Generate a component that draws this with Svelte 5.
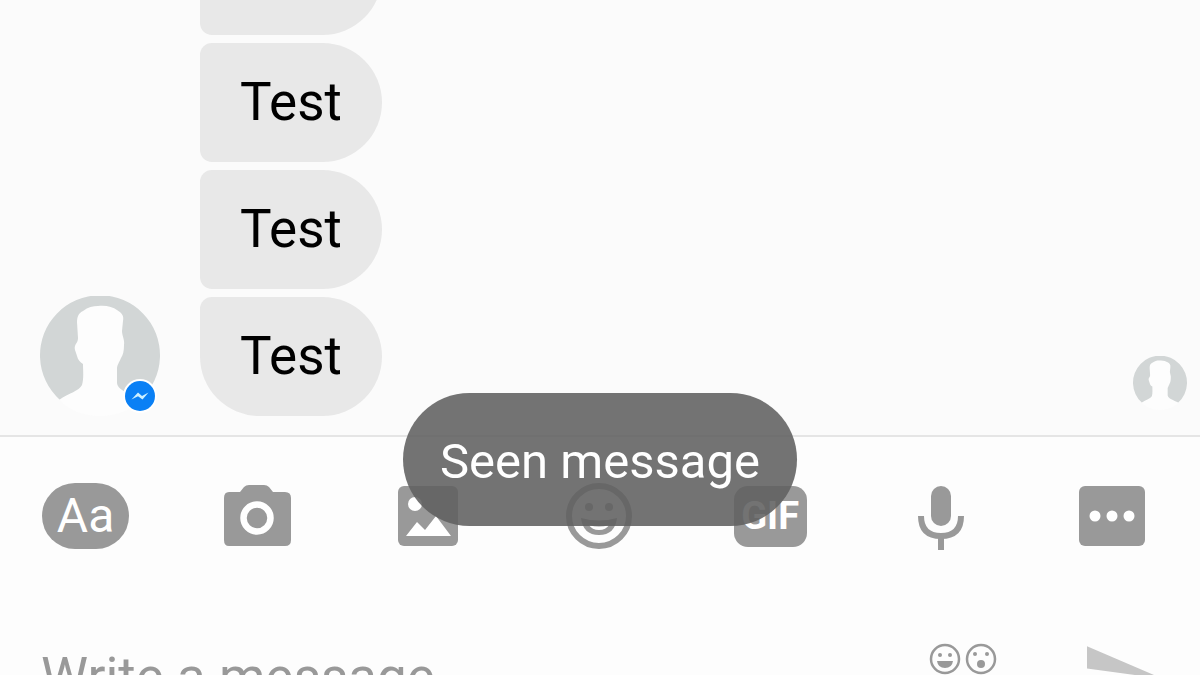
<script lang="ts">
    let draft = '';

    const messages = ['Test', 'Test', 'Test', 'Test'];
</script>

<svelte:head>
    <title>Chat</title>
</svelte:head>

{#snippet avatar()}
    <svg class="avatar" viewBox="0 0 120 120" aria-hidden="true">
        <path d="M20 104A60 60 0 1 1 100 104L60 96Z" fill="#d2d6d6" />
        <path
            d="M58 10C66 9 73 11 77 14C82 17 84 20 83 25L82 35C82 40 85 44 84 49C84 55 83 59 81 62C79 67 77 69 77 73V87C78 95 90 97 101 104C90 115 75 120 60 120S30 115 19 104C29 97 39 95 42 89C44 83 43 74 43 68C40 66 38 64 37 60C36 56 34 53 35 50C36 47 38 46 38 42L37 26C37 20 39 17 43 15C48 11 53 10 58 10Z"
            fill="#fdfdfd"
        />
    </svg>
{/snippet}

<main class="screen">
    <section class="chat">
        <div class="sender">
            {@render avatar()}
            <svg class="badge" viewBox="0 0 34 34" aria-hidden="true">
                <circle cx="17" cy="17" r="17" fill="#fff" />
                <circle cx="17" cy="17" r="15" fill="#0a80f5" />
                <path d="M8.500 20.500L15 13.500L19 17L25.500 13.500L19.500 20.500L15 17.200Z" fill="#cdf0ff" />
            </svg>
        </div>

        <div class="bubbles">
            {#each messages as message}
                <div class="bubble">{message}</div>
            {/each}
        </div>

        <div class="seen">
            {@render avatar()}
        </div>
    </section>

    <section class="composer">
        <div class="toolbar">
            <button class="tool" aria-label="Text">
                <span class="text-icon">Aa</span>
            </button>
            <button class="tool" aria-label="Camera">
                <svg viewBox="0 0 88 68">
                    <path d="M16 10H27L31 5Q33 3 36 3H51Q54 3 56 5L60 10H72Q78 10 78 16V58Q78 64 72 64H16Q11 64 11 58V16Q11 10 16 10Z" />
                    <circle cx="44" cy="36" r="13.500" fill="none" stroke="#fff" stroke-width="6.500" />
                </svg>
            </button>
            <button class="tool" aria-label="Photos">
                <svg viewBox="0 0 88 68">
                    <rect x="14" y="4" width="60" height="60" rx="6" />
                    <circle cx="31" cy="22" r="7" fill="#fff" />
                    <path d="M22 54L33 40L41 48L52 34L67 54Z" fill="#fff" />
                </svg>
            </button>
            <button class="tool" aria-label="Stickers">
                <svg viewBox="0 0 88 68">
                    <circle cx="44" cy="34" r="30" fill="none" stroke="#999" stroke-width="6" />
                    <circle cx="34" cy="25" r="4" />
                    <circle cx="54" cy="25" r="4" />
                    <path d="M26 36Q44 41 62 36Q60 53 44 53T26 36Z" />
                    <path d="M34 43Q44 46 54 43Q51 48 44 48T34 43Z" fill="#fff" />
                </svg>
            </button>
            <button class="tool" aria-label="GIFs">
                <span class="gif-icon">GIF</span>
            </button>
            <button class="tool" aria-label="Voice">
                <svg viewBox="0 0 88 68">
                    <rect x="34" y="4" width="20" height="40" rx="10" />
                    <path d="M24 34Q24 54 44 54T64 34" fill="none" stroke="#999" stroke-width="6" />
                    <path d="M41 54H47V68H41Z" />
                </svg>
            </button>
            <button class="tool" aria-label="More">
                <svg viewBox="0 0 88 68">
                    <rect x="11" y="4" width="66" height="60" rx="6" />
                    <circle cx="27" cy="34" r="5.500" fill="#fff" />
                    <circle cx="44" cy="34" r="5.500" fill="#fff" />
                    <circle cx="61" cy="34" r="5.500" fill="#fff" />
                </svg>
            </button>
        </div>

        <form class="write" on:submit|preventDefault>
            <input type="text" placeholder="Write a message" aria-label="Write a message" bind:value={draft} />
            <button type="button" class="emoji" aria-label="Emoji">
                <svg viewBox="0 0 68 32">
                    <g fill="none" stroke="#999" stroke-width="2.500">
                        <circle cx="16" cy="16" r="14" />
                        <circle cx="52" cy="16" r="14" />
                    </g>
                    <circle cx="11" cy="12" r="2" />
                    <circle cx="21" cy="12" r="2" />
                    <path d="M8 18H24Q23 25 16 25T8 18Z" />
                    <circle cx="46" cy="11" r="2" />
                    <circle cx="58" cy="11" r="2" />
                    <circle cx="52" cy="21" r="4" />
                </svg>
            </button>
            <button type="submit" class="send" aria-label="Send">
                <svg viewBox="2 3 21 18">
                    <path d="M2 21L23 12L2 3V10L17 12L2 14Z" fill="#c6c6c6" />
                </svg>
            </button>
        </form>
    </section>

    <div class="toast" role="status">Seen message</div>
</main>

<style>
    :global(body) {
        margin: 0;
        overflow: hidden;
    }

    .screen {
        display: flex;
        flex-direction: column;
        height: 100vh;
        overflow: hidden;
        background-color: #fdfdfd;
        font-family: Roboto, 'Liberation Sans', sans-serif;
    }

    .chat {
        flex: 1;
        min-height: 0;
        display: flex;
        align-items: flex-end;
        gap: 40px;
        padding: 0 13px 19px 40px;
        background-color: #fbfbfb;
        overflow: hidden;
    }

    .avatar {
        display: block;
        width: 100%;
    }

    .sender {
        position: relative;
        width: 120px;
    }

    .badge {
        position: absolute;
        right: 3px;
        bottom: 3px;
        width: 34px;
        height: 34px;
    }

    .bubbles {
        display: flex;
        flex-direction: column;
        align-items: flex-start;
        gap: 8px;
    }

    .bubble {
        padding: 0 40px;
        border-radius: 12px 60px 60px 12px;
        background-color: #e8e8e8;
        color: #000;
        font-size: 53px;
        line-height: 119px;
    }

    .bubble:last-child {
        border-bottom-left-radius: 60px;
    }

    .seen {
        width: 54px;
        margin-left: auto;
        margin-bottom: 6px;
    }

    .composer {
        /* the input row runs past the bottom edge of the screen */
        margin-bottom: -36px;
        padding-top: 45px;
        border-top: 2px solid #e5e5e5;
    }

    .toolbar {
        display: grid;
        grid-template-columns: repeat(7, 1fr);
        padding-right: 2px;
    }

    button {
        padding: 0;
        border: none;
        background: none;
        font-family: inherit;
        cursor: pointer;
    }

    .tool {
        display: flex;
        align-items: center;
        justify-content: center;
        height: 68px;
    }

    .tool svg {
        width: 88px;
        height: 68px;
        fill: #999;
    }

    .text-icon {
        width: 87px;
        border-radius: 34px;
        background-color: #999;
        color: #fff;
        font-size: 48px;
        line-height: 66px;
    }

    .gif-icon {
        width: 73px;
        border-radius: 14px;
        background-color: #999;
        color: #fff;
        font-size: 38px;
        font-weight: 700;
        line-height: 61px;
    }

    .write {
        display: flex;
        align-items: center;
        gap: 90px;
        margin-top: 93px;
        padding: 0 46px 0 41px;
    }

    .write input {
        flex: 1;
        min-width: 0;
        height: 68px;
        padding: 0;
        border: none;
        outline: none;
        background: none;
        color: #000;
        font-family: inherit;
        font-size: 53px;
    }

    .write input::placeholder {
        color: #999;
        opacity: 1;
    }

    .write svg {
        display: block;
        width: 100%;
        height: 100%;
    }

    .emoji {
        align-self: flex-start;
        width: 68px;
        height: 32px;
        fill: #999;
    }

    .send {
        width: 67px;
        height: 58px;
        margin-bottom: 4px;
    }

    .toast {
        position: absolute;
        bottom: 149px;
        left: 50%;
        transform: translateX(-50%);
        padding: 4px 37px 0;
        border-radius: 67px;
        background-color: rgba(96, 96, 96, 0.88);
        color: #fff;
        font-size: 49px;
        line-height: 129px;
        white-space: nowrap;
    }
</style>
